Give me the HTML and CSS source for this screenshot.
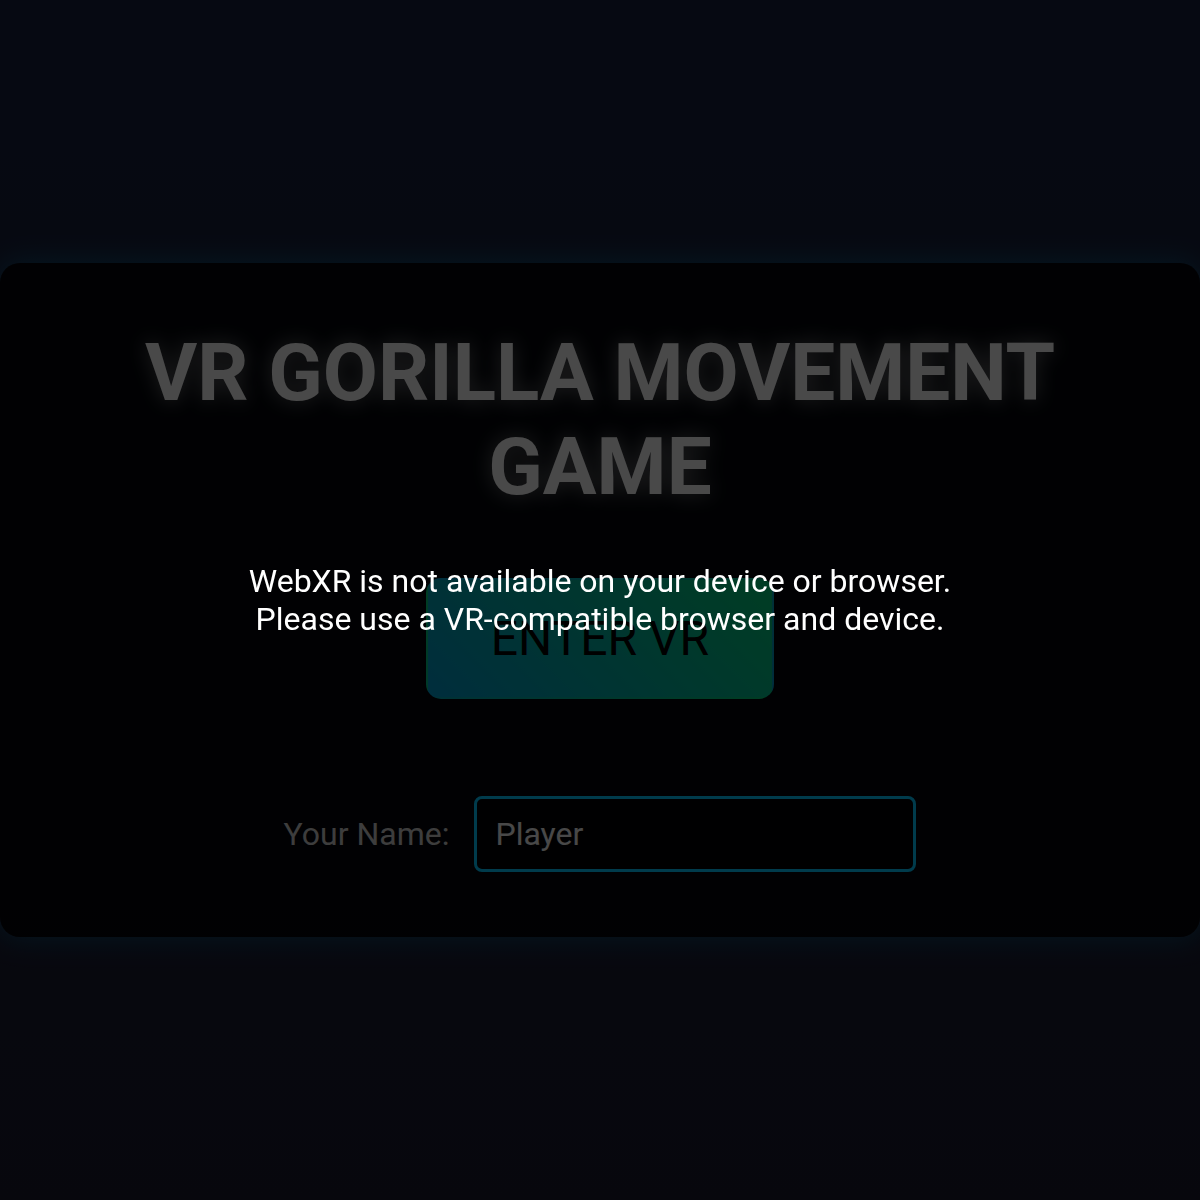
FILE: index.html
```html
<!DOCTYPE html>
<html lang="en">

<head>
    <meta charset="UTF-8">
    <meta name="viewport" content="width=device-width, initial-scale=1.0">
    <title>VR Gorilla Movement Game</title>
    <link rel="stylesheet" href="styles.css">
</head>

<body>
    <!-- Start Menu -->
    <div class="menu">
        <h1 class="title">VR GORILLA MOVEMENT GAME</h1>

        <button class="enter-btn" id="enterVR">ENTER VR</button>

        <div class="name-row">
            <label for="playerName">Your Name:</label>
            <input type="text" id="playerName" value="Player">
        </div>
    </div>

    <div class="xr-warning" id="xrWarning">
        <p>WebXR is not available on your device or browser.<br>Please use a VR-compatible browser and device.</p>
    </div>
</body>

</html>
```

FILE: styles.css
```css
/* Reset */
* {
    margin: 0;
    padding: 0;
    box-sizing: border-box;
}

:root {
    --cyan: #00c6ff;
    --green: #00ff88;
}

body {
    font-family: 'Roboto', 'Liberation Sans', sans-serif;
    background: linear-gradient(to bottom, #16213e, #1a1a2e);
    color: #fff;
    min-height: 100vh;
    display: flex;
    align-items: center;
    justify-content: center;
}

/* Menu Card */
.menu {
    width: 100%;
    display: flex;
    flex-direction: column;
    align-items: center;
    padding: 63px 40px 65px;
    background: rgba(0, 0, 0, 0.8);
    border-radius: 20px;
    box-shadow: 0 0 30px rgba(0, 198, 255, 0.3);
}

.title {
    font-size: 80px;
    font-weight: 700;
    line-height: normal;
    text-align: center;
    color: #f5f5f5;
    text-shadow: 0 0 20px rgba(255, 255, 255, 0.4);
    margin-bottom: 64px;
}

.enter-btn {
    font-family: inherit;
    font-size: 48px;
    color: #000;
    padding: 30px 63px;
    border: 2px solid transparent;
    border-radius: 15px;
    background: linear-gradient(45deg, #0099cc, #00cc77);
    cursor: pointer;
    margin-bottom: 97px;
}

.name-row {
    display: flex;
    align-items: center;
    gap: 25px;
}

.name-row label {
    font-size: 32px;
    color: #ccc;
}

.name-row input {
    width: 442px;
    font-family: inherit;
    font-size: 32px;
    color: #f0f0f0;
    padding: 16px 18px;
    background: rgba(0, 0, 0, 0.6);
    border: 3px solid var(--cyan);
    border-radius: 8px;
    outline: none;
}

/* WebXR Warning Overlay */
.xr-warning {
    position: fixed;
    inset: 0;
    background: rgba(0, 0, 0, 0.7);
    display: flex;
    align-items: center;
    justify-content: center;
    z-index: 10;
}

.xr-warning p {
    font-size: 32px;
    line-height: normal;
    text-align: center;
    color: #fff;
}
```
